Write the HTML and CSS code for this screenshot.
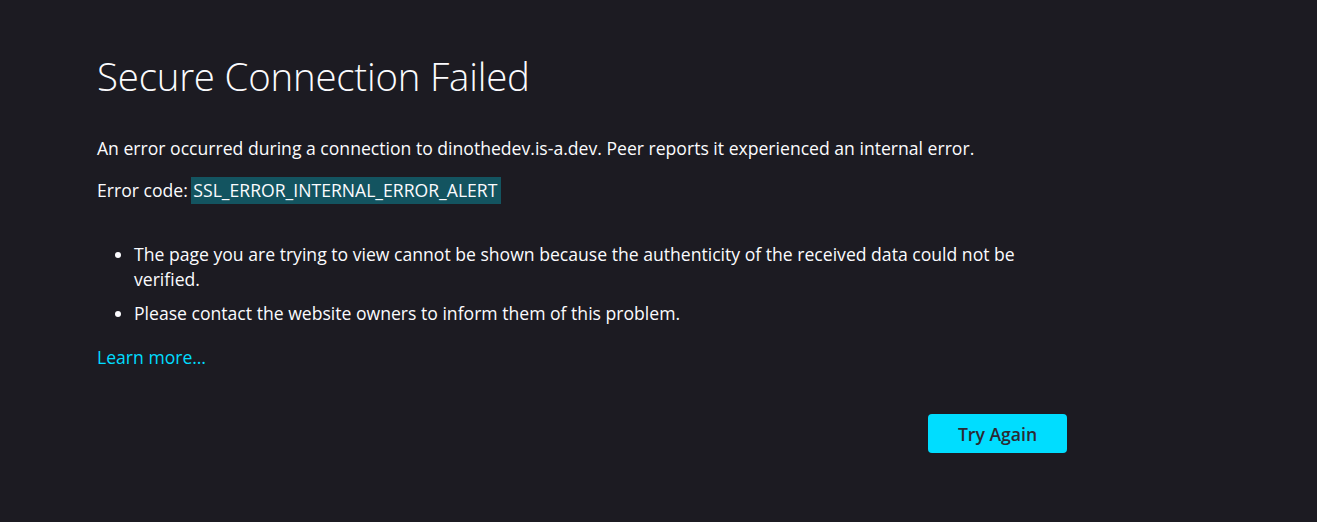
FILE: index.html
```html
<!DOCTYPE html>
<html lang="en">
<head>
<meta charset="utf-8">
<title>Problem loading page</title>
<link rel="stylesheet" href="styles.css">
</head>
<body>
<main class="page">
  <h1 class="title">Secure Connection Failed</h1>
  <p class="desc">An error occurred during a connection to dinothedev.is-a.dev. Peer reports it experienced an internal error.</p>
  <p class="code">Error code: <span class="code-hl">SSL_ERROR_INTERNAL_ERROR_ALERT</span></p>
  <ul class="list">
    <li>The page you are trying to view cannot be shown because the authenticity of the received data could not be verified.</li>
    <li>Please contact the website owners to inform them of this problem.</li>
  </ul>
  <p class="learn"><a href="#" class="link">Learn more…</a></p>
  <div class="actions">
    <button class="btn" type="button">Try Again</button>
  </div>
</main>
</body>
</html>
```
FILE: styles.css
```css
html, body {
  margin: 0;
  padding: 0;
  background: #1c1b22;
  color: #fbfbfe;
  font-family: "Open Sans", "Noto Sans", sans-serif;
}
.page {
  width: 970px;
  padding: 51px 0 0 97px;
}
.title {
  font-size: 38.4px;
  font-weight: 300;
  line-height: 50px;
  margin: 0;
  letter-spacing: -0.2px;
}
.desc, .code, .learn {
  font-size: 17.6px;
  line-height: 25px;
  margin: 0;
}
.desc { margin-top: 35px; }
.code { margin-top: 17px; }
.code-hl {
  background: #135460;
  padding: 1px 4px 2px 2px;
  margin-left: -1px;
}
.list {
  font-size: 17.6px;
  line-height: 25px;
  margin: 39px 0 0;
  padding-left: 37px;
}
.list li + li { margin-top: 9px; }
.learn { margin-top: 19px; }
.link {
  color: #00ddff;
  text-decoration: none;
}
.actions {
  display: flex;
  justify-content: flex-end;
  margin-top: 44px;
}
.btn {
  width: 139px;
  height: 39px;
  border: none;
  border-radius: 4px;
  background: #00ddff;
  color: #2b2a33;
  font-family: inherit;
  font-size: 17.6px;
  font-weight: 600;
}
```
